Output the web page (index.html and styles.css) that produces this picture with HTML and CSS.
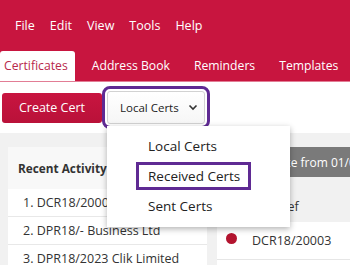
FILE: index.html
```html
<!DOCTYPE html>
<html lang="en">
<head>
    <meta charset="UTF-8">
    <meta name="viewport" content="width=device-width, initial-scale=1.0">
    <title>Certificates</title>
    <link rel="stylesheet" href="styles.css">
</head>
<body>
    <header class="appbar">
        <nav class="menu">
            <span>File</span>
            <span>Edit</span>
            <span>View</span>
            <span>Tools</span>
            <span>Help</span>
        </nav>
        <nav class="tabs">
            <span class="tab active">Certificates</span>
            <span class="tab">Address Book</span>
            <span class="tab">Reminders</span>
            <span class="tab">Templates</span>
        </nav>
    </header>

    <div class="toolbar">
        <button class="btn-create">Create Cert</button>
        <div class="select-wrap">
            <div class="select">
                <span>Local Certs</span>
                <svg class="chevron" width="10" height="7" viewBox="0 0 10 7">
                    <polyline points="1.5,1.5 5,5 8.5,1.5" fill="none" stroke="#333" stroke-width="1.6"/>
                </svg>
            </div>
            <div class="dropdown">
                <div class="option">Local Certs</div>
                <div class="option"><span class="marked">Received Certs</span></div>
                <div class="option">Sent Certs</div>
            </div>
        </div>
    </div>

    <main class="content">
        <section class="recent">
            <div class="recent-title">Recent Activity</div>
            <div class="recent-row">1. DCR18/20003</div>
            <div class="recent-row">2. DPR18/- Business Ltd</div>
            <div class="recent-row">3. DPR18/2023 Clik Limited</div>
        </section>
        <section class="certs">
            <div class="certs-bar">Expiry date from 01/01/2018</div>
            <div class="certs-head">Cert Ref</div>
            <div class="cert-row"><span class="dot"></span>DCR18/20003</div>
            <div class="cert-row"><span class="dot"></span>IPR18/-</div>
        </section>
    </main>
</body>
</html>
```

FILE: styles.css
```css
body {
    margin: 0;
    width: 350px;
    height: 265px;
    overflow: hidden;
    font-family: "Open Sans", "Noto Sans", sans-serif;
    color: #222;
    background-color: #fff;
}

.appbar {
    background-color: #c8153f;
    color: #fff;
    border-bottom: 1px solid #e27d95;
}

.menu {
    display: flex;
    gap: 15px;
    height: 51px;
    align-items: center;
    padding-left: 15px;
    font-size: 12.5px;
}

.tabs {
    display: flex;
    gap: 13px;
    height: 30px;
    align-items: stretch;
    font-size: 12.2px;
    white-space: nowrap;
    overflow: hidden;
}

.tab {
    display: flex;
    align-items: center;
    flex-shrink: 0;
    padding: 0 7px 1px 4px;
}

.tab.active {
    background-color: #fff;
    color: #b8284b;
    border-radius: 3px 3px 0 0;
}

.toolbar {
    display: flex;
    align-items: center;
    gap: 5px;
    height: 51px;
    padding-left: 2px;
}

.btn-create {
    width: 100px;
    height: 30px;
    border: none;
    border-radius: 3px;
    background: linear-gradient(#c81540, #b91139);
    color: #fff;
    font-family: inherit;
    font-size: 12.5px;
    padding: 0;
}

.select-wrap {
    position: relative;
}

.select {
    display: flex;
    align-items: center;
    justify-content: space-between;
    box-sizing: border-box;
    width: 98px;
    height: 33px;
    padding: 0 6px 0 12px;
    border: 1px solid #d2d2d2;
    border-radius: 3px;
    background: linear-gradient(#fff, #f6f6f6);
    font-size: 11.5px;
    outline: 3px solid #5f2a93;
    outline-offset: 2px;
}

.dropdown {
    position: absolute;
    top: 35px;
    left: 0;
    width: 183px;
    padding: 5px 0 6px;
    background-color: #fff;
    box-shadow: 0 2px 6px rgba(0, 0, 0, 0.3);
    font-size: 13.5px;
    z-index: 2;
}

.option {
    height: 30px;
    display: flex;
    align-items: center;
    padding-left: 41px;
}

.marked {
    padding: 2px 8px 2px 9px;
    margin-left: -9px;
    outline: 3px solid #5f2a93;
}

.content {
    display: flex;
    gap: 10px;
    box-sizing: border-box;
    height: 132px;
    padding: 14px 0 0 8px;
    overflow: hidden;
    background-color: #f1f1f1;
    font-size: 12.5px;
}

.recent {
    width: 199px;
    flex-shrink: 0;
    background-color: #f8f8f8;
}

.recent-title {
    height: 42px;
    display: flex;
    align-items: center;
    padding-left: 10px;
    font-weight: bold;
    font-size: 11.8px;
    color: #333;
}

.recent-row {
    height: 27px;
    display: flex;
    align-items: center;
    padding-left: 15px;
    background-color: #fff;
    border-bottom: 1px solid #e8e8e8;
    white-space: nowrap;
    color: #333;
}

.certs {
    flex: 1;
    min-width: 0;
    overflow: hidden;
}

.certs-bar {
    height: 30px;
    display: flex;
    align-items: center;
    padding-left: 18px;
    background-color: #7a7a7a;
    color: #fff;
    white-space: nowrap;
    font-size: 12px;
}

.certs-head {
    height: 45px;
    display: flex;
    align-items: flex-end;
    box-sizing: border-box;
    padding: 0 0 7px 35px;
    color: #333;
}

.cert-row {
    height: 37px;
    display: flex;
    align-items: center;
    gap: 15px;
    padding-left: 9px;
    background-color: #fff;
    border-bottom: 1px solid #e6e6e6;
    color: #333;
}

.dot {
    width: 11px;
    height: 11px;
    border-radius: 50%;
    background-color: #b3142f;
    margin-top: -4px;
}
```
